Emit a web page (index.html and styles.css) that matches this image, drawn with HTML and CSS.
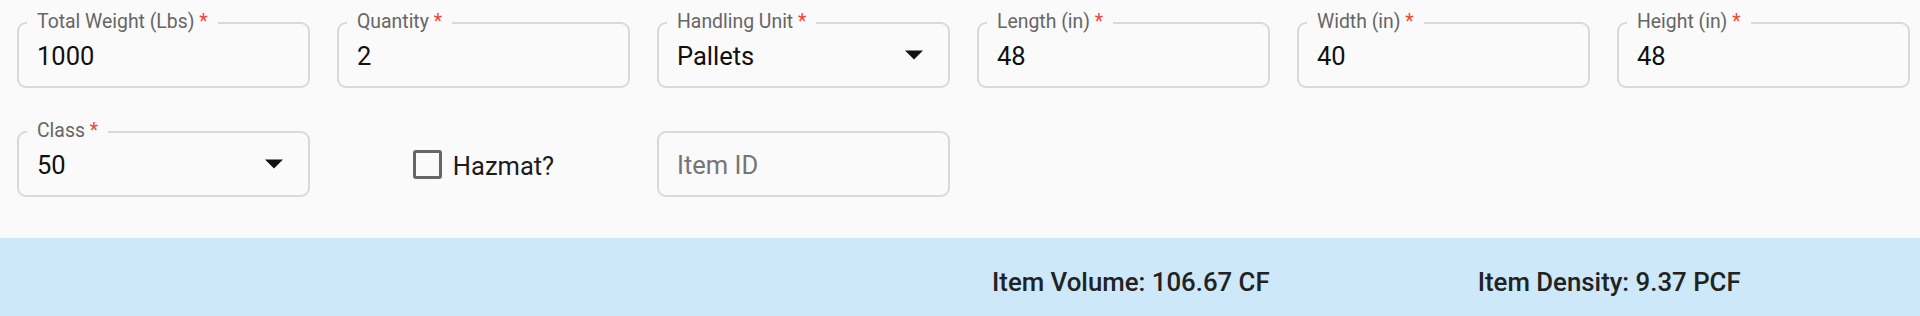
FILE: index.html
```html
<!DOCTYPE html>
<html lang="en">
<head>
<meta charset="utf-8">
<title>Item Form</title>
<link rel="stylesheet" href="styles.css">
</head>
<body>
<div class="form">
  <div class="field">
    <span class="label">Total Weight (Lbs)<span class="req"> *</span></span>
    <span class="value">1000</span>
  </div>
  <div class="field">
    <span class="label">Quantity<span class="req"> *</span></span>
    <span class="value">2</span>
  </div>
  <div class="field select">
    <span class="label">Handling Unit<span class="req"> *</span></span>
    <span class="value">Pallets</span>
    <svg class="arrow" width="18" height="10" viewBox="0 0 18 10"><path d="M0 0.5 L9 9.5 L18 0.5 Z" fill="#111"/></svg>
  </div>
  <div class="field">
    <span class="label">Length (in)<span class="req"> *</span></span>
    <span class="value">48</span>
  </div>
  <div class="field">
    <span class="label">Width (in)<span class="req"> *</span></span>
    <span class="value">40</span>
  </div>
  <div class="field">
    <span class="label">Height (in)<span class="req"> *</span></span>
    <span class="value">48</span>
  </div>

  <div class="field select">
    <span class="label">Class<span class="req"> *</span></span>
    <span class="value">50</span>
    <svg class="arrow" width="18" height="10" viewBox="0 0 18 10"><path d="M0 0.5 L9 9.5 L18 0.5 Z" fill="#111"/></svg>
  </div>
  <label class="check">
    <span class="box"></span>
    <span class="check-text">Hazmat?</span>
  </label>
  <div class="field">
    <span class="placeholder">Item ID</span>
  </div>
</div>
<div class="summary">
  <span class="stat">Item Volume: 106.67 CF</span>
  <span class="stat">Item Density: 9.37 PCF</span>
</div>
</body>
</html>
```
FILE: styles.css
```css
html, body {
  margin: 0;
  padding: 0;
}
body {
  background: #fafafa;
  font-family: Roboto, "Liberation Sans", Arial, sans-serif;
  width: 1920px;
  height: 316px;
  overflow: hidden;
}
.form {
  display: grid;
  grid-template-columns: repeat(6, 293px);
  column-gap: 27px;
  row-gap: 43px;
  padding: 22px 10px 41px 17px;
}
.field {
  position: relative;
  box-sizing: border-box;
  height: 66px;
  border: 2px solid #d9d9d9;
  border-radius: 9px;
  display: flex;
  align-items: center;
  padding: 2px 25px 0 18px;
}
.label {
  position: absolute;
  left: 8px;
  top: -14px;
  padding: 0 10px;
  background: #fafafa;
  font-size: 19.4px;
  line-height: 23px;
  color: #666666;
  white-space: nowrap;
}
.req {
  color: #f44336;
}
.value {
  font-size: 25.5px;
  color: #111111;
}
.placeholder {
  font-size: 25.5px;
  color: #757575;
}
.arrow {
  margin-left: auto;
  margin-top: -2px;
  display: block;
}
.check {
  display: flex;
  align-items: center;
  justify-content: center;
  gap: 11px;
  padding-top: 1px;
}
.box {
  box-sizing: border-box;
  width: 29px;
  height: 29px;
  border: 3px solid #666666;
  border-radius: 3px;
}
.check-text {
  font-size: 25.5px;
  color: #1c1c1c;
  padding-top: 2px;
}
.summary {
  box-sizing: border-box;
  height: 78px;
  background: #cce8f9;
  display: flex;
  padding: 29px 0 0 992px;
  gap: 208px;
}
.stat {
  font-size: 25.8px;
  font-weight: 500;
  color: #222222;
  line-height: 30px;
}
```
